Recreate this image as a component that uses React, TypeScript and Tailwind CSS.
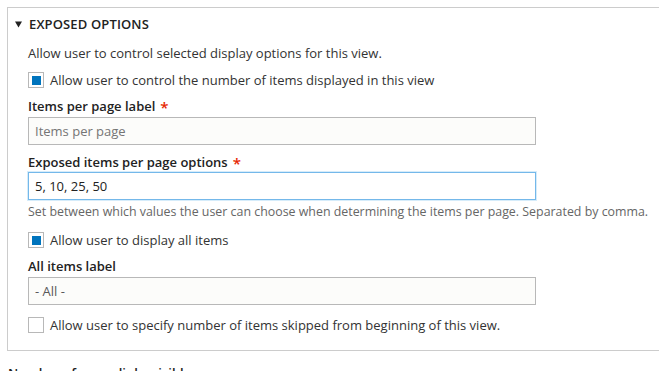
import React from "react";

const font = { fontFamily: '"Open Sans", "Liberation Sans", sans-serif' };

const Checkbox = ({ checked }: { checked: boolean }) => (
  <span className="w-4 h-4 border border-[#b8b8b8] bg-white flex items-center justify-center shrink-0">
    {checked && <span className="w-[9px] h-[9px] bg-[#0074bd]" />}
  </span>
);

const Label = ({ text, required }: { text: string; required?: boolean }) => (
  <div className="h-[18px] flex items-center text-[13px] font-semibold text-[#222]">
    {text}
    {required && <span className="ml-[5px] text-[#e62600] text-[15px] leading-none">*</span>}
  </div>
);

export default function App() {
  return (
    <div className="w-[659px] h-[371px] overflow-hidden bg-white pt-[7px] pl-[7px]" style={font}>
      <div className="w-[653px] h-[344px] border border-[#ccc] flex flex-col">
        {/* Summary */}
        <div className="h-[33px] flex items-center pl-[7px] gap-[7px] text-[13px] font-semibold text-[#222] tracking-[0.01em]">
          <svg width="7" height="7" viewBox="0 0 7 7">
            <polygon points="0,0.5 7,0.5 3.5,6.5" fill="#222" />
          </svg>
          EXPOSED OPTIONS
        </div>

        <div className="pl-5 flex flex-col text-[13px] text-[#333]">
          <div className="mt-[4px] h-[18px] flex items-center">
            Allow user to control selected display options for this view.
          </div>

          <div className="mt-[9px] h-4 flex items-center gap-[6px]">
            <Checkbox checked />
            <span className="pt-[1px]">Allow user to control the number of items displayed in this view</span>
          </div>

          <div className="mt-[10px]">
            <Label text="Items per page label" required />
          </div>
          <input
            readOnly
            placeholder="Items per page"
            className="mt-[1px] w-[508px] h-[28px] border border-[#b8b8b8] bg-[#fcfcfa] px-[6px] text-[13px] text-[#333] placeholder:text-[#757575] outline-none"
          />

          <div className="mt-[9px]">
            <Label text="Exposed items per page options" required />
          </div>
          <input
            readOnly
            value="5, 10, 25, 50"
            className="w-[508px] h-[28px] border border-[#74b8ea] bg-white px-[6px] text-[13px] text-[#222] shadow-[0_0_0_1px_#d6ecfa] outline-none"
          />
          <div className="mt-[4px] h-[16px] flex items-center text-[12.4px] text-[#666]">
            Set between which values the user can choose when determining the items per page. Separated by comma.
          </div>

          <div className="mt-[12px] h-4 flex items-center gap-[6px]">
            <Checkbox checked />
            <span className="pt-[1px]">Allow user to display all items</span>
          </div>

          <div className="mt-[10px]">
            <Label text="All items label" />
          </div>
          <input
            readOnly
            value="- All -"
            className="mt-[1px] w-[508px] h-[28px] border border-[#b8b8b8] bg-[#fcfcfa] px-[6px] text-[13px] text-[#595959] outline-none"
          />

          <div className="mt-[12px] h-4 flex items-center gap-[6px]">
            <Checkbox checked={false} />
            <span className="pt-[1px]">Allow user to specify number of items skipped from beginning of this view.</span>
          </div>
        </div>
      </div>

      <div className="mt-[14px] pl-[1px] h-[18px] flex items-center text-[13px] font-semibold text-[#222]">
        Number of pager links visible
      </div>
    </div>
  );
}
